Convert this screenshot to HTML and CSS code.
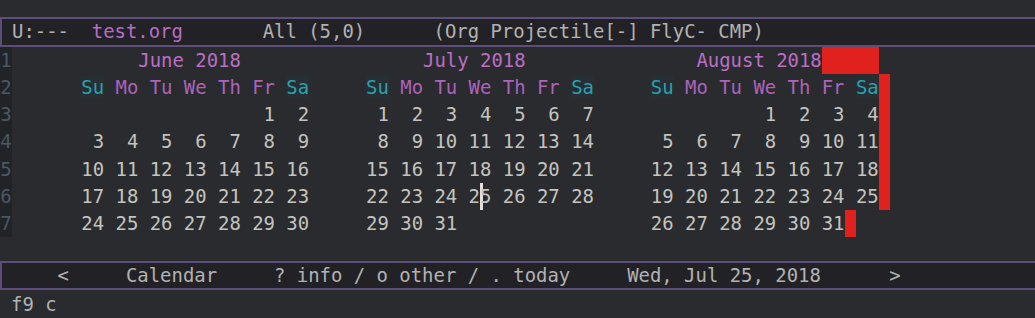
FILE: index.html
```
<!DOCTYPE html>
<html>
<head lang="en">
	<meta charset="UTF-8">
	<title>Calendar</title>
	<link rel="stylesheet" href="styles.css">
</head>
<body>
	<div class="top_gap"></div>
	<div class="modeline modeline_top">U:---  <span class="bufname">test.org</span>       All (5,0)      (Org Projectile[-] FlyC- CMP)</div>

	<div class="window">
		<div class="gutter">
			<div>1</div>
			<div>2</div>
			<div>3</div>
			<div>4</div>
			<div>5</div>
			<div>6</div>
			<div>7</div>
		</div>
		<div class="months">
			<!-- June -->
			<div class="month">
				<div class="title">June 2018</div>
				<span class="we"><b>Su</b></span><span class="wd">Mo</span><span class="wd">Tu</span><span class="wd">We</span><span class="wd">Th</span><span class="wd">Fr</span><span class="we"><b>Sa</b></span>
				<span class="start6">1</span><span>2</span>
				<span>3</span><span>4</span><span>5</span><span>6</span><span>7</span><span>8</span><span>9</span>
				<span>10</span><span>11</span><span>12</span><span>13</span><span>14</span><span>15</span><span>16</span>
				<span>17</span><span>18</span><span>19</span><span>20</span><span>21</span><span>22</span><span>23</span>
				<span>24</span><span>25</span><span>26</span><span>27</span><span>28</span><span>29</span><span>30</span>
			</div>
			<!-- July -->
			<div class="month">
				<div class="title">July 2018</div>
				<span class="we"><b>Su</b></span><span class="wd">Mo</span><span class="wd">Tu</span><span class="wd">We</span><span class="wd">Th</span><span class="wd">Fr</span><span class="we"><b>Sa</b></span>
				<span>1</span><span>2</span><span>3</span><span>4</span><span>5</span><span>6</span><span>7</span>
				<span>8</span><span>9</span><span>10</span><span>11</span><span>12</span><span>13</span><span>14</span>
				<span>15</span><span>16</span><span>17</span><span>18</span><span>19</span><span>20</span><span>21</span>
				<span>22</span><span>23</span><span>24</span><span>2<i class="cursor">5</i></span><span>26</span><span>27</span><span>28</span>
				<span>29</span><span>30</span><span>31</span>
			</div>
			<!-- August -->
			<div class="month">
				<div class="title title_right">August 2018<i class="ws ws5"></i></div>
				<span class="we"><b>Su</b></span><span class="wd">Mo</span><span class="wd">Tu</span><span class="wd">We</span><span class="wd">Th</span><span class="wd">Fr</span><span class="we"><b>Sa</b></span>
				<span class="start4">1</span><span>2</span><span>3</span><span>4</span>
				<span>5</span><span>6</span><span>7</span><span>8</span><span>9</span><span>10</span><span>11</span>
				<span>12</span><span>13</span><span>14</span><span>15</span><span>16</span><span>17</span><span>18</span>
				<span>19</span><span>20</span><span>21</span><span>22</span><span>23</span><span>24</span><span>25</span>
				<span>26</span><span>27</span><span>28</span><span>29</span><span>30</span><span>31</span><span class="eol"><i class="ws ws1"></i></span>
			</div>
			<!-- trailing whitespace after Sa column -->
			<div class="trail"></div>
		</div>
	</div>

	<div class="modeline modeline_bottom">    &lt;     Calendar     ? info / o other / . today     Wed, Jul 25, 2018      &gt;</div>
	<div class="echo">f9 c</div>
</body>
</html>
```

FILE: styles.css
```
*{
	margin:0;
	padding:0;
}
body{
	background:#292b2e;
	color:#b2b2b2;
	font-family:"DejaVu Sans Mono", monospace;
	font-size:18.93px;
	line-height:27.14px;
	width:1035px;
	height:318px;
	overflow:hidden;
}
b, i{
	font-weight:normal;
	font-style:normal;
}
.top_gap{
	height:17px;
}
.modeline{
	background:#222226;
	border:2px solid #5d4d7a;
	border-right:none;
	padding-left:10px;
	white-space:pre;
}
.modeline_top{
	line-height:24px;
	padding-bottom:2px;
}
.modeline_bottom{
	line-height:25px;
}
.bufname{
	color:#b86cc2;
}
.window{
	display:flex;
	height:214px;
}
.gutter{
	width:12px;
	background:#222327;
	color:#4b5764;
	text-align:center;
	align-self:flex-start;
}
.months{
	display:flex;
	align-items:flex-start;
	padding-left:calc(5ch + 1px);
}
.month{
	display:grid;
	grid-template-columns:repeat(7, 3ch);
	grid-auto-rows:27.14px;
	text-align:right;
	color:#c4c3bf;
}
.month + .month{
	margin-left:4ch;
}
.title{
	grid-column:1 / -1;
	text-align:center;
	color:#bc6ec5;
}
.title_right{
	text-align:right;
}
.wd{
	color:#ad63bc;
}
.we{
	color:#2aa1ae;
}
.we b{
	background:#272f35;
}
.start6{
	grid-column-start:6;
}
.start4{
	grid-column-start:4;
}
.cursor{
	display:inline-block;
	box-shadow:inset 3px 0 #e3dedd;
}
.eol{
	text-align:left;
}
.ws{
	display:inline-block;
	vertical-align:top;
	height:27.14px;
	background:#e0211d;
}
.ws5{
	width:5ch;
}
.ws1{
	width:1ch;
}
.trail{
	width:1ch;
	height:135.7px;
	margin-top:27.14px;
	background:#e0211d;
}
.echo{
	padding-left:11px;
	line-height:28px;
}
```
